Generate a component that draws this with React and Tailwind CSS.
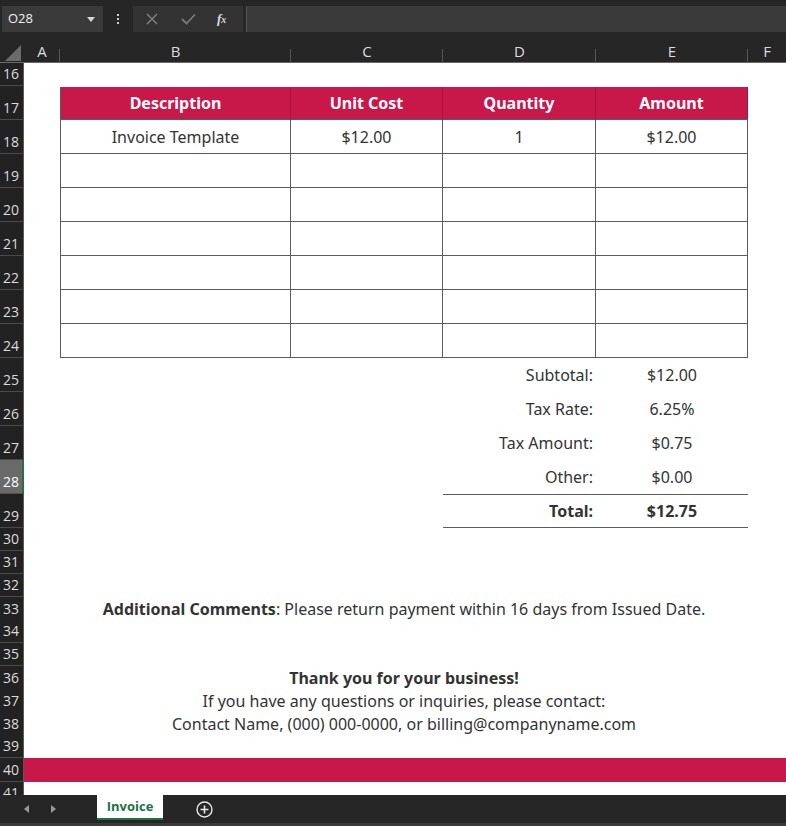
import React from "react";

const GRID = "grid grid-cols-[24px_36px_231px_152px_153px_152px_38px]";
const FONT = { fontFamily: '"Noto Sans", "DejaVu Sans", sans-serif' };

function RowHead({ n, sel }) {
  return (
    <div
      className={
        sel
          ? "flex items-end pl-[3px] pb-[2px] bg-[#6a6a6a] text-white text-[14px] leading-[18px] border-b border-[#505050] border-r-2 border-r-[#217346]"
          : "flex items-end pl-[3px] pb-[2px] bg-[#222222] text-[#dcdcdc] text-[14px] leading-[18px] border-b border-[#4a4a4a] border-r border-r-[#5a5a5a]"
      }
      style={{ fontFamily: '"Open Sans", "Noto Sans", sans-serif' }}
    >
      {n}
    </div>
  );
}

function Empty() {
  return <div className="bg-white" />;
}

function Row({ n, h, sel, children }) {
  return (
    <div className={`${GRID} ${h}`}>
      <RowHead n={n} sel={sel} />
      {children}
    </div>
  );
}

function TCell({ first, children, head }) {
  const base = "flex items-center justify-center border-r border-b border-[#5c5c5c] text-[16px]";
  const l = first ? " border-l" : "";
  const bg = head ? " bg-[#c8184a] text-white font-bold" : " bg-white text-[#333333]";
  return <div className={base + l + bg}>{children}</div>;
}

function TableRow({ n, vals = ["", "", "", ""] }) {
  return (
    <Row n={n} h="h-[34px]">
      <Empty />
      <TCell first>{vals[0]}</TCell>
      <TCell>{vals[1]}</TCell>
      <TCell>{vals[2]}</TCell>
      <TCell>{vals[3]}</TCell>
      <Empty />
    </Row>
  );
}

function SumRow({ n, label, value, bold, sel, lines }) {
  const lineCls = lines ? " border-t border-b border-[#5c5c5c]" : "";
  const weight = bold ? " font-bold" : "";
  return (
    <Row n={n} h="h-[34px]" sel={sel}>
      <Empty />
      <Empty />
      <Empty />
      <div className={"bg-white flex items-center justify-end pr-[3px] text-[16px] text-[#333333]" + weight + lineCls}>
        {label}
      </div>
      <div className={"bg-white flex items-center justify-center text-[16px] text-[#333333]" + weight + lineCls}>
        {value}
      </div>
      <Empty />
    </Row>
  );
}

function TextRow({ n, children, bold }) {
  return (
    <Row n={n} h="h-[23px]">
      <Empty />
      <div
        className={
          "col-span-4 bg-white flex items-center justify-center text-[16px] text-[#333333] whitespace-nowrap" +
          (bold ? " font-bold" : "")
        }
      >
        {children}
      </div>
      <Empty />
    </Row>
  );
}

function BlankRow({ n }) {
  return (
    <Row n={n} h="h-[23px]">
      <div className="col-span-6 bg-white" />
    </Row>
  );
}

export default function App() {
  return (
    <div className="w-[786px] h-[826px] bg-[#262626] overflow-hidden flex flex-col" style={FONT}>
      {/* Formula bar */}
      <div className="h-[40px] flex items-start pt-[6px] gap-0 bg-[#262626] relative">
        <div className="ml-[2px] w-[101px] h-[26px] bg-[#3a3a3a] flex items-center justify-between pl-[6px] pr-[8px]">
          <span className="text-[13px] text-[#f0f0f0]" style={{ fontFamily: '"Open Sans", sans-serif' }}>O28</span>
          <svg width="8" height="5" viewBox="0 0 8 5"><path d="M0 0 L8 0 L4 5 Z" fill="#d8d8d8" /></svg>
        </div>
        <div className="w-[30px] h-[26px] flex flex-col items-center justify-center gap-[2px]">
          <span className="w-[2px] h-[2px] bg-[#d0d0d0]" />
          <span className="w-[2px] h-[2px] bg-[#d0d0d0]" />
          <span className="w-[2px] h-[2px] bg-[#d0d0d0]" />
        </div>
        <div className="w-[110px] h-[26px] bg-[#333333] flex items-center">
          <svg className="ml-[13px]" width="12" height="12" viewBox="0 0 12 12">
            <path d="M1 1 L11 11 M11 1 L1 11" stroke="#7a7a7a" strokeWidth="1.6" />
          </svg>
          <svg className="ml-[23px]" width="15" height="12" viewBox="0 0 15 12">
            <path d="M1 6 L5.5 10.5 L14 1.5" stroke="#7a7a7a" strokeWidth="1.8" fill="none" />
          </svg>
          <span className="ml-[21px] text-[13px] italic text-[#dcdcdc] font-bold" style={{ fontFamily: '"Liberation Serif", serif' }}>
            f<span className="text-[10px]">x</span>
          </span>
        </div>
        <div className="ml-[3px] w-[1px] h-[26px] bg-[#555]" />
        <div className="flex-1 h-[26px] bg-[#3a3a3a]" />
      </div>

      {/* Column headers */}
      <div className={`${GRID} h-[23px] bg-[#262626] border-b border-[#6a6a6a] text-[#dcdcdc] text-[15px]`} style={{ fontFamily: '"Open Sans", sans-serif' }}>
        <div className="relative">
          <svg className="absolute left-[5px] top-[5px]" width="16" height="16" viewBox="0 0 16 16">
            <path d="M16 0 L16 16 L0 16 Z" fill="#6b6b6b" />
          </svg>
        </div>
        {["A", "B", "C", "D", "E", "F"].map((c, i) => (
          <div key={c} className="flex items-center justify-center relative">
            {c}
            {i < 5 && <span className="absolute right-0 bottom-0 w-[1px] h-[14px] bg-[#555555]" />}
          </div>
        ))}
      </div>

      {/* Sheet */}
      <div className="h-[732px] overflow-hidden bg-white">
        <BlankRow n="16" />
        <Row n="17" h="h-[34px]">
          <Empty />
          <div className="bg-white pt-[1px] col-span-4 grid grid-cols-[231px_152px_153px_152px]">
            {["Description", "Unit Cost", "Quantity", "Amount"].map((t, i) => (
              <div
                key={t}
                className={
                  "bg-[#c8184a] text-white font-bold text-[16px] flex items-center justify-center border-b border-[#5c5c5c] border-r border-r-[#a8143f]" +
                  (i === 0 ? " border-l border-l-[#5c5c5c]" : "") +
                  (i === 3 ? " border-r-[#5c5c5c]" : "")
                }
              >
                {t}
              </div>
            ))}
          </div>
          <Empty />
        </Row>
        <TableRow n="18" vals={["Invoice Template", "$12.00", "1", "$12.00"]} />
        <TableRow n="19" />
        <TableRow n="20" />
        <TableRow n="21" />
        <TableRow n="22" />
        <TableRow n="23" />
        <TableRow n="24" />
        <SumRow n="25" label="Subtotal:" value="$12.00" />
        <SumRow n="26" label="Tax Rate:" value="6.25%" />
        <SumRow n="27" label="Tax Amount:" value="$0.75" />
        <SumRow n="28" label="Other:" value="$0.00" sel />
        <SumRow n="29" label="Total:" value="$12.75" bold lines />
        <BlankRow n="30" />
        <BlankRow n="31" />
        <BlankRow n="32" />
        <TextRow n="33">
          <span className="font-bold">Additional Comments</span>: Please return payment within 16 days from Issued Date.
        </TextRow>
        <BlankRow n="34" />
        <BlankRow n="35" />
        <TextRow n="36" bold>Thank you for your business!</TextRow>
        <TextRow n="37">If you have any questions or inquiries, please contact:</TextRow>
        <TextRow n="38">Contact Name, (000) 000-0000, or billing@companyname.com</TextRow>
        <BlankRow n="39" />
        <Row n="40" h="h-[24px]">
          <div className="col-span-6 bg-[#c8184a]" />
        </Row>
        <BlankRow n="41" />
      </div>

      {/* Tab bar */}
      <div className="h-[28px] bg-[#262626] flex items-start">
        <div className="w-[97px] h-[28px] flex items-center">
          <svg className="ml-[24px]" width="5" height="8" viewBox="0 0 5 8"><path d="M5 0 L0 4 L5 8 Z" fill="#9a9a9a" /></svg>
          <svg className="ml-[22px]" width="5" height="8" viewBox="0 0 5 8"><path d="M0 0 L5 4 L0 8 Z" fill="#9a9a9a" /></svg>
        </div>
        <div className="w-[66px] h-[25px] bg-white border-b-2 border-[#1e7145] flex items-center justify-center text-[13px] font-bold text-[#1e7145]" style={{ fontFamily: '"Open Sans", sans-serif' }}>
          Invoice
        </div>
        <div className="ml-[33px] h-[28px] flex items-center">
          <svg width="17" height="17" viewBox="0 0 17 17">
            <circle cx="8.5" cy="8.5" r="7.5" stroke="#e8e8e8" strokeWidth="1.4" fill="none" />
            <path d="M8.5 4.5 V12.5 M4.5 8.5 H12.5" stroke="#e8e8e8" strokeWidth="1.6" />
          </svg>
        </div>
      </div>
      <div className="flex-1 bg-[#3a3a3a]" />
    </div>
  );
}
